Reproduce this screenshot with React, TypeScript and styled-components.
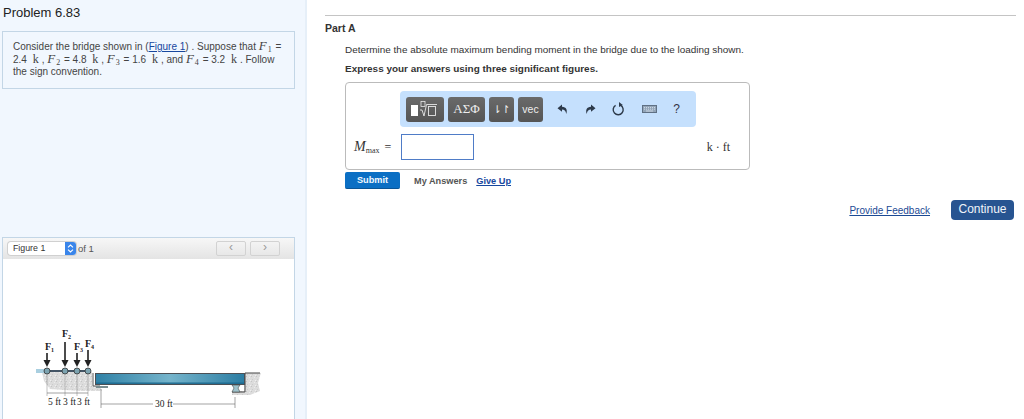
import { FC } from "react";
import styled, { createGlobalStyle } from "styled-components";

const GlobalStyle = createGlobalStyle`
  html, body {
    margin: 0;
    padding: 0;
    background: #fff;
    overflow: hidden;
    font-family: "Liberation Sans", Arial, sans-serif;
  }
`;

const Math = styled.span`
  font-family: "Liberation Serif", "Times New Roman", serif;
  font-size: 12px;
  line-height: 0;
  padding: 0 3px;
`;

const Var = styled.span`
  font-family: "Liberation Serif", "Times New Roman", serif;
  font-style: italic;
  font-size: 13px;
  line-height: 0;
  padding-right: 1px;
`;

const Sub = styled.sub`
  font-size: 8px;
  line-height: 0;
  vertical-align: -2px;
  font-style: normal;
  padding-left: 1px;
`;

const Force: FC<{ n: number }> = ({ n }) => (
  <Var>
    F<Sub>{n}</Sub>
  </Var>
);

const BridgeFigure: FC = () => (
  <svg width="226" height="90" viewBox="0 0 226 90">
    <defs>
      <linearGradient id="beam" x1="0" x2="1" y1="0" y2="0">
        <stop offset="0" stopColor="#2f81a6" />
        <stop offset="0.5" stopColor="#75b4cb" />
        <stop offset="1" stopColor="#2b7da3" />
      </linearGradient>
      <pattern id="soil" width="5" height="5" patternUnits="userSpaceOnUse">
        <rect width="5" height="5" fill="#dcdcdc" />
        <rect width="1" height="1" fill="#c4c4c4" />
        <rect x="3" y="1" width="1" height="1" fill="#ececec" />
        <rect x="1" y="3" width="1" height="1" fill="#cbcbcb" />
        <rect x="4" y="4" width="1" height="1" fill="#efefef" />
      </pattern>
      <marker id="head" markerWidth="5" markerHeight="5" refX="3" refY="2.5" orient="auto">
        <path d="M0 0 L5 2.5 L0 5 Z" fill="#222" />
      </marker>
    </defs>
    <path d="M6 51 H56 V65 H64 L66 70 H44 L14 68 L8 60 Z" fill="url(#soil)" />
    <path d="M208 52 H225 L222 62 L224 70 L214 74 H196 V70 H208 Z" fill="url(#soil)" />
    <rect x="0" y="48" width="10" height="4" fill="#a9cfe0" />
    <rect x="8" y="49" width="46" height="2" fill="#456" />
    {[11, 29, 41, 52].map((x) => (
      <g key={x}>
        <circle cx={x} cy="50" r="3" fill="#7ca3b0" stroke="#333" strokeWidth="0.8" />
        <line x1={x} y1="53" x2={x} y2="75" stroke="#999" strokeWidth="0.6" />
      </g>
    ))}
    <g stroke="#111" strokeWidth="1.5">
      <line x1="11" y1="32" x2="11" y2="43" markerEnd="url(#head)" />
      <line x1="29" y1="21" x2="29" y2="43" markerEnd="url(#head)" />
      <line x1="41" y1="32" x2="41" y2="43" markerEnd="url(#head)" />
      <line x1="52" y1="29" x2="52" y2="43" markerEnd="url(#head)" />
    </g>
    <g fontFamily="Liberation Serif, serif" fontWeight="700" fontSize="10" fill="#222">
      <text x="9" y="29">
        F<tspan fontSize="6" dy="1.5">1</tspan>
      </text>
      <text x="26" y="16">
        F<tspan fontSize="6" dy="1.5">2</tspan>
      </text>
      <text x="38" y="29">
        F<tspan fontSize="6" dy="1.5">3</tspan>
      </text>
      <text x="49" y="26">
        F<tspan fontSize="6" dy="1.5">4</tspan>
      </text>
    </g>
    <path d="M57 52 V65 H64" fill="none" stroke="#555" strokeWidth="1" />
    <path d="M196 71 H209 V52 H224" fill="none" stroke="#444" strokeWidth="1" />
    <rect x="59.5" y="52.5" width="149" height="11" fill="url(#beam)" stroke="#4b5055" strokeWidth="1" />
    <rect x="60" y="61.5" width="148" height="1.4" fill="#1d6a8f" />
    <rect x="60" y="65" width="12" height="2" fill="#7a8d90" />
    <path d="M196 64 H204 L202 67 L204 71 H196 L198 67 Z" fill="#9fc3cc" stroke="#444" strokeWidth="0.6" />
    <g stroke="#666" strokeWidth="0.6" fill="none">
      <path d="M11 72 H52" />
      <path d="M65 68 V87 M199 76 V87 M65 83 H117 M137 83 H199" />
    </g>
    <g fontFamily="Liberation Serif, serif" fontSize="9.5" fill="#222">
      <text x="12" y="84">5 ft</text>
      <text x="27" y="84">3 ft</text>
      <text x="41" y="84">3 ft</text>
      <text x="119" y="86">30 ft</text>
    </g>
  </svg>
);

const KeyboardIcon: FC = () => (
  <svg width="15" height="8" viewBox="0 0 15 8">
    <rect x="0.5" y="0.5" width="14" height="7" fill="#93a5b8" stroke="#5f7084" />
    <path d="M2 2.5 H13 M2 4.2 H13" stroke="#d2dde8" strokeWidth="0.9" strokeDasharray="1 1" />
    <path d="M4 6 H11" stroke="#d2dde8" strokeWidth="0.9" />
  </svg>
);

const UndoIcon: FC<{ flip?: boolean }> = ({ flip }) => (
  <svg width="11" height="11" viewBox="0 0 11 11" style={flip ? { transform: "scaleX(-1)" } : undefined}>
    <path d="M5 0.5 L0.5 4.2 L5 7.8 V5.6 C7.4 5.6 8.6 6.8 9.3 10 C10.6 6.2 9.4 3 5 2.8 Z" fill="#2d3a4a" />
  </svg>
);

const ResetIcon: FC = () => (
  <svg width="13" height="14" viewBox="0 0 13 14">
    <path d="M3.6 3.4 A5 5 0 1 0 8.4 3.2" fill="none" stroke="#2d3a4a" strokeWidth="1.4" />
    <path d="M7 0 L10.8 2.9 L7 5 Z" fill="#2d3a4a" />
  </svg>
);

const TemplateIcon: FC = () => (
  <svg width="31" height="16" viewBox="0 0 31 16">
    <rect x="1" y="4" width="7" height="11" fill="#fff" />
    <rect x="18.5" y="5.5" width="7" height="9" fill="none" stroke="#e8e8e8" strokeWidth="0.9" />
    <rect x="11" y="0.5" width="4" height="5" fill="none" stroke="#e8e8e8" strokeWidth="0.8" />
    <path d="M10 9 L12 9 L14 15 L16.5 3.5 H27" fill="none" stroke="#e8e8e8" strokeWidth="0.9" />
  </svg>
);

const App: FC = () => (
  <Page>
    <GlobalStyle />
    <LeftColumn>
      <Title>Problem 6.83</Title>
      <Statement>
        Consider the bridge shown in (<BlueLink>Figure 1</BlueLink>) . Suppose that <Force n={1} /> =
        <br />
        2.4 <Math>k</Math>, <Force n={2} /> = 4.8 <Math>k</Math>, <Force n={3} /> = 1.6 <Math>k</Math>, and{" "}
        <Force n={4} /> = 3.2 <Math>k</Math>. Follow
        <br />
        the sign convention.
      </Statement>
      <FigurePanel>
        <FigureBar>
          <FigureSelect>
            <SelectLabel>Figure 1</SelectLabel>
            <SelectStepper>
              <svg width="7" height="9" viewBox="0 0 7 9">
                <path d="M1 3.4 L3.5 1 L6 3.4 M1 5.6 L3.5 8 L6 5.6" fill="none" stroke="#fff" strokeWidth="1.1" />
              </svg>
            </SelectStepper>
          </FigureSelect>
          <OfLabel>of 1</OfLabel>
          <PagerButton>‹</PagerButton>
          <PagerButton>›</PagerButton>
        </FigureBar>
        <FigureBody>
          <BridgeFigure />
        </FigureBody>
      </FigurePanel>
    </LeftColumn>
    <RightColumn>
      <PartHeader>Part A</PartHeader>
      <Indented>
        <Question>Determine the absolute maximum bending moment in the bridge due to the loading shown.</Question>
        <Instruction>Express your answers using three significant figures.</Instruction>
        <AnswerBox>
          <Toolbar>
            <ToolGroup>
              <ToolButton $width={38}>
                <TemplateIcon />
              </ToolButton>
              <ToolButton $width={37} $serif>
                ΑΣΦ
              </ToolButton>
              <ToolButton $width={25}>⇂↾</ToolButton>
              <ToolButton $width={25}>vec</ToolButton>
            </ToolGroup>
            <PlainTools>
              <UndoIcon />
              <UndoIcon flip />
              <ResetIcon />
              <KeyboardIcon />
              <HelpMark>?</HelpMark>
            </PlainTools>
          </Toolbar>
          <AnswerRow>
            <MathLabel>
              <i>M</i>
              <small>max</small> =
            </MathLabel>
            <AnswerInput />
            <Unit>k · ft</Unit>
          </AnswerRow>
        </AnswerBox>
        <ActionRow>
          <SubmitButton>Submit</SubmitButton>
          <GreyAction>My Answers</GreyAction>
          <GiveUp>Give Up</GiveUp>
        </ActionRow>
      </Indented>
      <FooterRow>
        <Feedback>Provide Feedback</Feedback>
        <ContinueButton>Continue</ContinueButton>
      </FooterRow>
    </RightColumn>
  </Page>
);

export default App;

const Page = styled.div`
  display: flex;
  width: 1024px;
  height: 419px;
  overflow: hidden;
`;

const LeftColumn = styled.div`
  width: 303px;
  padding: 5px 0 0 2px;
  flex: none;
  background: #f1f7fe;
  border-right: 2px solid #e6eff8;
  box-sizing: content-box;
  margin-right: 18px;
`;

const Title = styled.h1`
  margin: 0 0 11px 1px;
  font-size: 13px;
  line-height: 15px;
  font-weight: 400;
  color: #222;
`;

const Statement = styled.div`
  width: 293px;
  height: 58px;
  box-sizing: border-box;
  padding: 9px 0 0 10px;
  border: 1px solid #c3d6e6;
  font-size: 10px;
  line-height: 12.5px;
  color: #444;
  white-space: nowrap;
`;

const BlueLink = styled.a`
  color: #17479e;
  text-decoration: underline;
`;

const FigurePanel = styled.div`
  width: 293px;
  margin-top: 148px;
  height: 190px;
  box-sizing: border-box;
  border: 1px solid #c3d6e6;
  border-bottom: none;
  background: #fff;
`;

const FigureBar = styled.div`
  display: flex;
  align-items: center;
  height: 21px;
  padding: 0 14px 0 5px;
  background: linear-gradient(#f7f7f7, #e4e4e4);
`;

const FigureSelect = styled.div`
  display: flex;
  width: 68px;
  height: 13px;
  border-radius: 3px;
  overflow: hidden;
  background: #fff;
  box-shadow: 0 0 0 1px #d0d0d0;
`;

const SelectLabel = styled.span`
  flex: 1;
  padding-left: 5px;
  font-size: 8.8px;
  line-height: 13px;
  color: #333;
`;

const SelectStepper = styled.span`
  display: flex;
  align-items: center;
  justify-content: center;
  width: 11px;
  background: #3a85ea;
`;

const OfLabel = styled.span`
  flex: 1;
  margin-left: 2px;
  font-size: 9.5px;
  color: #555;
`;

const PagerButton = styled.span`
  width: 28px;
  height: 13px;
  margin-left: 4px;
  border: 1px solid #d2d2d2;
  border-radius: 2px;
  text-align: center;
  font-size: 12px;
  line-height: 11px;
  color: #999;
`;

const FigureBody = styled.div`
  padding: 62px 0 0 33px;
`;

const RightColumn = styled.div`
  flex: 1;
  padding-right: 8px;
  padding-top: 15px;
`;

const PartHeader = styled.h2`
  margin: 0;
  padding-top: 6px;
  border-top: 1px solid #c4c4c4;
  font-size: 10.5px;
  line-height: 13px;
  font-weight: 700;
  color: #333;
`;

const Indented = styled.div`
  padding-left: 20px;
`;

const Question = styled.p`
  margin: 9px 0 0;
  font-size: 9.95px;
  line-height: 12px;
  color: #333;
`;

const Instruction = styled.p`
  margin: 7px 0 0;
  font-size: 9.95px;
  line-height: 12px;
  font-weight: 700;
  color: #333;
`;

const AnswerBox = styled.div`
  width: 405px;
  height: 88px;
  margin-top: 7px;
  padding: 8px 9px 0 8px;
  box-sizing: border-box;
  border: 1px solid #bbb;
  border-radius: 4px;
`;

const Toolbar = styled.div`
  display: flex;
  align-items: center;
  width: 296px;
  height: 36px;
  margin-left: 46px;
  padding: 0 6px;
  box-sizing: border-box;
  background: #c5e0fd;
  border-radius: 4px;
`;

const ToolGroup = styled.div`
  display: flex;
  gap: 4px;
`;

const ToolButton = styled.span<{ $width: number; $serif?: boolean }>`
  display: flex;
  align-items: center;
  justify-content: center;
  width: ${({ $width }) => $width}px;
  height: 25px;
  border-radius: 3px;
  background: linear-gradient(#6a6a6a, #555);
  color: #eee;
  font-size: ${({ $serif }) => ($serif ? 13 : 10.5)}px;
  font-family: ${({ $serif }) => ($serif ? '"Liberation Serif", serif' : '"Liberation Sans", "DejaVu Sans", sans-serif')};
`;

const PlainTools = styled.div`
  display: flex;
  align-items: center;
  justify-content: space-between;
  flex: 1;
  padding: 0 10px 0 14px;
`;

const HelpMark = styled.span`
  font-size: 12px;
  color: #334;
`;

const AnswerRow = styled.div`
  display: flex;
  align-items: center;
  height: 26px;
  margin-top: 7px;
`;

const MathLabel = styled.span`
  width: 47px;
  flex: none;
  font-family: "Liberation Serif", serif;
  font-size: 12px;
  color: #333;
  i {
    font-size: 14px;
  }
  small {
    font-size: 8px;
    vertical-align: -2px;
    margin-right: 2px;
  }
`;

const AnswerInput = styled.div`
  width: 73px;
  height: 26px;
  box-sizing: border-box;
  border: 1px solid #4f7cc7;
`;

const Unit = styled.span`
  margin-left: auto;
  margin-right: 10px;
  font-family: "Liberation Serif", serif;
  font-size: 12px;
  color: #333;
`;

const ActionRow = styled.div`
  display: flex;
  align-items: center;
  margin-top: 2px;
  font-size: 9.2px;
  font-weight: 700;
`;

const SubmitButton = styled.span`
  width: 55px;
  height: 17px;
  border-radius: 2px;
  background: #0b6fc4;
  border-bottom: 1px solid #0a5596;
  box-sizing: border-box;
  color: #f2f8ff;
  text-align: center;
  line-height: 16px;
`;

const GreyAction = styled.span`
  margin-left: 14px;
  color: #555;
`;

const GiveUp = styled.a`
  margin-left: 9px;
  color: #17479e;
  text-decoration: underline;
`;

const FooterRow = styled.div`
  display: flex;
  align-items: center;
  justify-content: flex-end;
  gap: 21px;
  margin-top: 11px;
  margin-right: 2px;
`;

const Feedback = styled.a`
  font-size: 10px;
  color: #1c4a94;
  text-decoration: underline;
`;

const ContinueButton = styled.span`
  width: 63px;
  height: 20px;
  border-radius: 4px;
  background: #275491;
  color: #f0f4fa;
  text-align: center;
  font-size: 12px;
  line-height: 19px;
`;
